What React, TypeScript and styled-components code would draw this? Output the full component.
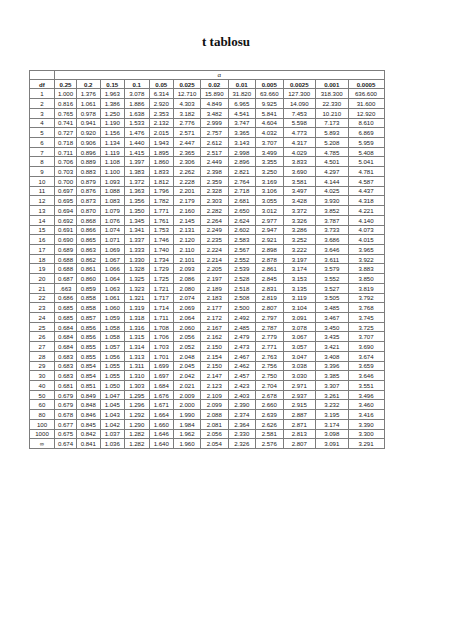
import React from "react";
import styled, { createGlobalStyle } from "styled-components";

const GlobalStyle = createGlobalStyle`
  html, body { margin: 0; padding: 0; background: #ffffff; }
  body { font-family: "Liberation Sans", Arial, sans-serif; }
`;

const alphas = ["0.25", "0.2", "0.15", "0.1", "0.05", "0.025", "0.02", "0.01", "0.005", "0.0025", "0.001", "0.0005"];

const raw = `1|1.000 1.376 1.963 3.078 6.314 12.710 15.890 31.820 63.660 127.300 318.300 636.600
2|0.816 1.061 1.386 1.886 2.920 4.303 4.849 6.965 9.925 14.090 22.330 31.600
3|0.765 0.978 1.250 1.638 2.353 3.182 3.482 4.541 5.841 7.453 10.210 12.920
4|0.741 0.941 1.190 1.533 2.132 2.776 2.999 3.747 4.604 5.598 7.173 8.610
5|0.727 0.920 1.156 1.476 2.015 2.571 2.757 3.365 4.032 4.773 5.893 6.869
6|0.718 0.906 1.134 1.440 1.943 2.447 2.612 3.143 3.707 4.317 5.208 5.959
7|0.711 0.896 1.119 1.415 1.895 2.365 2.517 2.998 3.499 4.029 4.785 5.408
8|0.706 0.889 1.108 1.397 1.860 2.306 2.449 2.896 3.355 3.833 4.501 5.041
9|0.703 0.883 1.100 1.383 1.833 2.262 2.398 2.821 3.250 3.690 4.297 4.781
10|0.700 0.879 1.093 1.372 1.812 2.228 2.359 2.764 3.169 3.581 4.144 4.587
11|0.697 0.876 1.088 1.363 1.796 2.201 2.328 2.718 3.106 3.497 4.025 4.437
12|0.695 0.873 1.083 1.356 1.782 2.179 2.303 2.681 3.055 3.428 3.930 4.318
13|0.694 0.870 1.079 1.350 1.771 2.160 2.282 2.650 3.012 3.372 3.852 4.221
14|0.692 0.868 1.076 1.345 1.761 2.145 2.264 2.624 2.977 3.326 3.787 4.140
15|0.691 0.866 1.074 1.341 1.753 2.131 2.249 2.602 2.947 3.286 3.733 4.073
16|0.690 0.865 1.071 1.337 1.746 2.120 2.235 2.583 2.921 3.252 3.686 4.015
17|0.689 0.863 1.069 1.333 1.740 2.110 2.224 2.567 2.898 3.222 3.646 3.965
18|0.688 0.862 1.067 1.330 1.734 2.101 2.214 2.552 2.878 3.197 3.611 3.922
19|0.688 0.861 1.066 1.328 1.729 2.093 2.205 2.539 2.861 3.174 3.579 3.883
20|0.687 0.860 1.064 1.325 1.725 2.086 2.197 2.528 2.845 3.153 3.552 3.850
21|.663 0.859 1.063 1.323 1.721 2.080 2.189 2.518 2.831 3.135 3.527 3.819
22|0.686 0.858 1.061 1.321 1.717 2.074 2.183 2.508 2.819 3.119 3.505 3.792
23|0.685 0.858 1.060 1.319 1.714 2.069 2.177 2.500 2.807 3.104 3.485 3.768
24|0.685 0.857 1.059 1.318 1.711 2.064 2.172 2.492 2.797 3.091 3.467 3.745
25|0.684 0.856 1.058 1.316 1.708 2.060 2.167 2.485 2.787 3.078 3.450 3.725
26|0.684 0.856 1.058 1.315 1.706 2.056 2.162 2.479 2.779 3.067 3.435 3.707
27|0.684 0.855 1.057 1.314 1.703 2.052 2.150 2.473 2.771 3.057 3.421 3.690
28|0.683 0.855 1.056 1.313 1.701 2.048 2.154 2.467 2.763 3.047 3.408 3.674
29|0.683 0.854 1.055 1.311 1.699 2.045 2.150 2.462 2.756 3.038 3.396 3.659
30|0.683 0.854 1.055 1.310 1.697 2.042 2.147 2.457 2.750 3.030 3.385 3.646
40|0.681 0.851 1.050 1.303 1.684 2.021 2.123 2.423 2.704 2.971 3.307 3.551
50|0.679 0.849 1.047 1.295 1.676 2.009 2.109 2.403 2.678 2.937 3.261 3.496
60|0.679 0.848 1.045 1.296 1.671 2.000 2.099 2.390 2.660 2.915 3.232 3.460
80|0.678 0.846 1.043 1.292 1.664 1.990 2.088 2.374 2.639 2.887 3.195 3.416
100|0.677 0.845 1.042 1.290 1.660 1.984 2.081 2.364 2.626 2.871 3.174 3.390
1000|0.675 0.842 1.037 1.282 1.646 1.962 2.056 2.330 2.581 2.813 3.098 3.300
∞|0.674 0.841 1.036 1.282 1.640 1.960 2.054 2.326 2.576 2.807 3.091 3.291`;

const rows = raw.split("\n").map((line) => {
  const [df, vals] = line.split("|");
  return { df, vals: vals.split(" ") };
});

const COLS = "26px 22px 23.5px 24.5px 24.5px 24.5px 27px 27.5px 27.5px 27.5px 32.5px 32.5px 36px";
const LINE = "#7d7d7d";

const Page = styled.div`
  width: 452px;
  min-height: 640px;
  background: #fff;
  padding-top: 34px;
  box-sizing: border-box;
`;

const Title = styled.h1`
  margin: 0;
  text-align: center;
  font-family: "Liberation Serif", "Times New Roman", serif;
  font-weight: bold;
  font-size: 13px;
  line-height: 16px;
  color: #111;
`;

const Grid = styled.div`
  margin: 20px 0 0 29px;
  display: grid;
  grid-template-columns: ${COLS};
  grid-auto-rows: 9.72px;
  width: max-content;
  font-family: "Liberation Sans", Arial, sans-serif;
  font-size: 6.1px;
  color: #222;
`;

const Cell = styled.div<{ $head?: boolean; $first?: boolean; $top?: boolean }>`
  display: flex;
  align-items: center;
  justify-content: center;
  box-sizing: border-box;
  border-right: 1px solid ${LINE};
  border-bottom: 1px solid ${LINE};
  border-left: ${(p) => (p.$first ? `1px solid ${LINE}` : "none")};
  border-top: ${(p) => (p.$top ? `1px solid ${LINE}` : "none")};
  font-weight: ${(p) => (p.$head ? "bold" : "normal")};
  white-space: nowrap;
  overflow: hidden;
`;

const AlphaCell = styled(Cell)`
  grid-column: 2 / -1;
  font-weight: normal;
`;

export default function App() {
  return (
    <Page>
      <GlobalStyle />
      <Title>t tablosu</Title>
      <Grid>
        <Cell $first $top />
        <AlphaCell $top>α</AlphaCell>
        <Cell $first $head>df</Cell>
        {alphas.map((a) => (
          <Cell key={a} $head>{a}</Cell>
        ))}
        {rows.map((r) => (
          <React.Fragment key={r.df}>
            <Cell $first>{r.df}</Cell>
            {r.vals.map((v, i) => (
              <Cell key={i}>{v}</Cell>
            ))}
          </React.Fragment>
        ))}
      </Grid>
    </Page>
  );
}
